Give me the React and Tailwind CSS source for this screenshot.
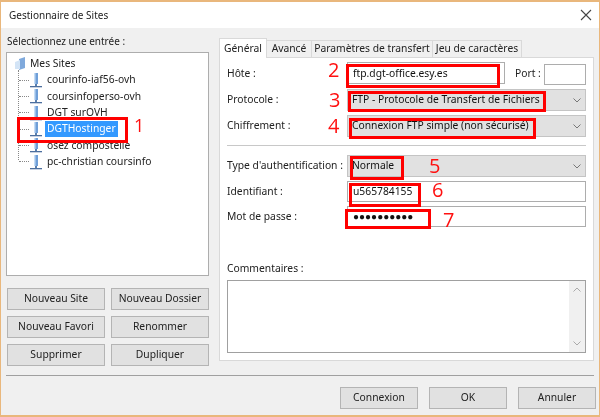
const font = { fontFamily: '"Noto Sans", "Open Sans", sans-serif' };

const sites = [
  { name: 'courinfo-iaf56-ovh' },
  { name: 'coursinfoperso-ovh' },
  { name: 'DGT surOVH' },
  { name: 'DGTHostinger', selected: true },
  { name: 'osez compostelle' },
  { name: 'pc-christian coursinfo' },
];

const leftButtons = ['Nouveau Site', 'Nouveau Dossier', 'Nouveau Favori', 'Renommer', 'Supprimer', 'Dupliquer'];

const marks = [
  { n: 1, box: 'left-[16px] top-[115px] w-[111px] h-[26px]', num: 'left-[133px] top-[110px] text-[18px]' },
  { n: 2, box: 'left-[345px] top-[62px] w-[154px] h-[24px]', num: 'left-[327px] top-[55px] text-[20px]' },
  { n: 3, box: 'left-[347px] top-[89px] w-[198px] h-[21px]', num: 'left-[328px] top-[85px] text-[20px]' },
  { n: 4, box: 'left-[348px] top-[116px] w-[187px] h-[21px]', num: 'left-[327px] top-[111px] text-[20px]' },
  { n: 5, box: 'left-[349px] top-[154px] w-[54px] h-[24px]', num: 'left-[428px] top-[151px] text-[20px]' },
  { n: 6, box: 'left-[348px] top-[181px] w-[72px] h-[24px]', num: 'left-[431px] top-[175px] text-[20px]' },
  { n: 7, box: 'left-[344px] top-[207px] w-[86px] h-[20px]', num: 'left-[442px] top-[205px] text-[20px]' },
];

function ServerIcon() {
  return (
    <svg width="12" height="16" viewBox="0 0 12 16" className="shrink-0">
      <rect x="4" y="1" width="4" height="11" fill="#6f9fd8" />
      <rect x="4" y="1" width="1.5" height="11" fill="#c4dcf5" />
      <rect x="5" y="12" width="2" height="2" fill="#5a7fae" />
      <rect x="0" y="14" width="12" height="1.3" fill="#4c6f9f" />
    </svg>
  );
}

function FolderIcon() {
  return (
    <svg width="12" height="15" viewBox="0 0 12 15" className="shrink-0">
      <path d="M5 3 L11 1 V12 L5 14 Z" fill="#7fa9dc" />
      <path d="M1 6 L6 4 V13 L1 13 Z" fill="#d3e4f6" />
    </svg>
  );
}

function Chevron({ color = '#777' }) {
  return (
    <svg width="8" height="5" viewBox="0 0 8 5" className="shrink-0">
      <path d="M0.5 0.5 L4 4 L7.5 0.5" fill="none" stroke={color} strokeWidth="1" />
    </svg>
  );
}

function Btn({ label, className }) {
  return (
    <div className={`flex h-[22px] items-center justify-center whitespace-nowrap border border-[#b4b4b4] bg-[#e1e1e1] text-[10.3px] text-[#222] ${className}`}>
      {label}
    </div>
  );
}

function Select({ label, value, className, labelClass = '' }) {
  return (
    <div className={`flex items-center ${className}`}>
      <div className={`w-[120px] shrink-0 whitespace-nowrap text-[10.3px] text-[#222] ${labelClass}`}>{label}</div>
      <div className="flex h-[22px] flex-1 items-center justify-between border border-[#c4c4c4] bg-[#e1e1e1] pl-[4px] pr-[4px] text-[10.3px] text-[#111]">
        <span className="whitespace-nowrap">{value}</span>
        <Chevron />
      </div>
    </div>
  );
}

function Field({ label, value, className, inputClass = 'text-[10.3px]' }) {
  return (
    <div className={`flex items-center ${className}`}>
      <div className="w-[120px] shrink-0 text-[10.3px] text-[#222]">{label}</div>
      <div className={`flex h-[21px] flex-1 items-center border border-[#adadad] bg-white pl-[5px] text-[#111] ${inputClass}`}>
        {value}
      </div>
    </div>
  );
}

export default function App() {
  return (
    <div style={font} className="relative flex h-[417px] w-[600px] flex-col overflow-hidden border-x border-[#e9b77c] border-t-2 border-b-2 bg-[#f0f0f0] blur-[0.45px]">
      <div className="flex h-[26px] shrink-0 items-center justify-between bg-white pl-[8px] pr-[7px] text-[10px] text-[#222]">
        <span>Gestionnaire de Sites</span>
        <svg width="12" height="12" viewBox="0 0 12 12">
          <path d="M1 1 L11 11 M11 1 L1 11" stroke="#444" strokeWidth="1.1" />
        </svg>
      </div>

      <div className="flex flex-1 pl-[5px] pr-[5px]">
        <div className="flex w-[203px] shrink-0 flex-col">
          <div className="mt-[6px] h-[18px] pl-[1px] text-[10px] leading-[14px] text-[#222]">Sélectionnez une entrée :</div>
          <div className="relative h-[224px] border border-[#adadad] bg-white pl-[7px] pt-[2px] text-[10.3px] text-[#222]">
            <div className="absolute left-[11px] top-[17px] h-[90px] w-px border-l border-dotted border-[#888]" />
            <div className="flex h-[17px] items-center gap-[4px]">
              <FolderIcon />
              <span>Mes Sites</span>
            </div>
            <div className="ml-[5px] flex flex-col">
              {sites.map((s) => (
                <div key={s.name} className="flex h-[16.3px] items-center">
                  <div className="mr-[1px] w-[10px] border-t border-dotted border-[#888]" />
                  <ServerIcon />
                  <span className={s.selected ? 'ml-[3px] bg-[#3399ff] px-[2px] text-white' : 'ml-[5px]'}>{s.name}</span>
                </div>
              ))}
            </div>
          </div>
          <div className="mt-[12px] grid grid-cols-2 gap-x-[6px] gap-y-[6px] pl-[1px]">
            {leftButtons.map((b) => (
              <Btn key={b} label={b} />
            ))}
          </div>
        </div>

        <div className="ml-[10px] flex flex-1 flex-col pt-[10px]">
          <div className="flex h-[19px] items-end text-[10.3px] text-[#222]">
            <div className="relative z-10 -mb-px flex h-[20px] w-[48px] items-center justify-center border border-b-0 border-[#d9d9d9] bg-white">Général</div>
            <div className="flex h-[17px] w-[45px] items-center justify-center whitespace-nowrap border border-b-0 border-l-0 border-[#d9d9d9]">Avancé</div>
            <div className="flex h-[17px] w-[121px] items-center justify-center whitespace-nowrap border border-b-0 border-l-0 border-[#d9d9d9]">Paramètres de transfert</div>
            <div className="flex h-[17px] w-[89px] items-center justify-center whitespace-nowrap border border-b-0 border-l-0 border-[#d9d9d9]">Jeu de caractères</div>
          </div>
          <div className="flex h-[304px] flex-col border border-[#d9d9d9] bg-white pl-[7px] pr-[7px] pt-[4px]">
            <div className="flex h-[22px] items-center text-[10.3px] text-[#222]">
              <div className="w-[120px] shrink-0 pt-[2px]">Hôte :</div>
              <div className="flex h-[22px] w-[158px] items-center border border-[#adadad] pl-[5px] pt-[2px] text-[#111]">ftp.dgt-office.esy.es</div>
              <div className="ml-[10px] w-[29px] shrink-0 whitespace-nowrap pt-[2px]">Port :</div>
              <div className="mt-[2px] h-[21px] flex-1 border border-[#adadad]" />
            </div>
            <Select className="mt-[5px]" labelClass="pb-[1px]" label="Protocole :" value="FTP - Protocole de Transfert de Fichiers" />
            <Select className="mt-[4px]" labelClass="pb-[1px]" label="Chiffrement :" value="Connexion FTP simple (non sécurisé)" />
            <div className="mt-[8px] border-t border-[#c8c8c8]" />
            <Select className="mt-[9px]" label="Type d'authentification :" value="Normale" />
            <Field className="mt-[4px]" label="Identifiant :" value="u565784155" />
            <Field className="mt-[4px]" label="Mot de passe :" value="●●●●●●●●●●" inputClass="text-[10px]" />
            <div className="mt-[32px] h-[18px] text-[10.3px] leading-[18px] text-[#222]">Commentaires :</div>
            <div className="mt-[3px] flex h-[73px] justify-end border border-[#a0a0a0] bg-white">
              <div className="flex h-full w-[16px] flex-col items-center justify-between bg-[#f0f0f0] py-[6px]">
                <svg width="8" height="5" viewBox="0 0 8 5"><path d="M0.5 4.5 L4 1 L7.5 4.5" fill="none" stroke="#aaa" strokeWidth="1" /></svg>
                <Chevron color="#aaa" />
              </div>
            </div>
          </div>
        </div>
      </div>

      <div className="mx-[5px] mt-[9px] border-t border-[#a0a0a0]" />
      <div className="flex h-[39px] shrink-0 items-start justify-end gap-[11px] pr-[3px] pt-[11px]">
        <Btn label="Connexion" className="w-[78px]" />
        <Btn label="OK" className="w-[78px]" />
        <Btn label="Annuler" className="w-[78px]" />
      </div>

      {marks.map((m) => (
        <div key={m.n}>
          <div className={`absolute border-[3px] border-[#ff0000] ${m.box}`} />
          <div style={{ fontFamily: '"Open Sans", sans-serif' }} className={`absolute leading-[26px] text-[#ff1010] ${m.num}`}>{m.n}</div>
        </div>
      ))}
    </div>
  );
}
